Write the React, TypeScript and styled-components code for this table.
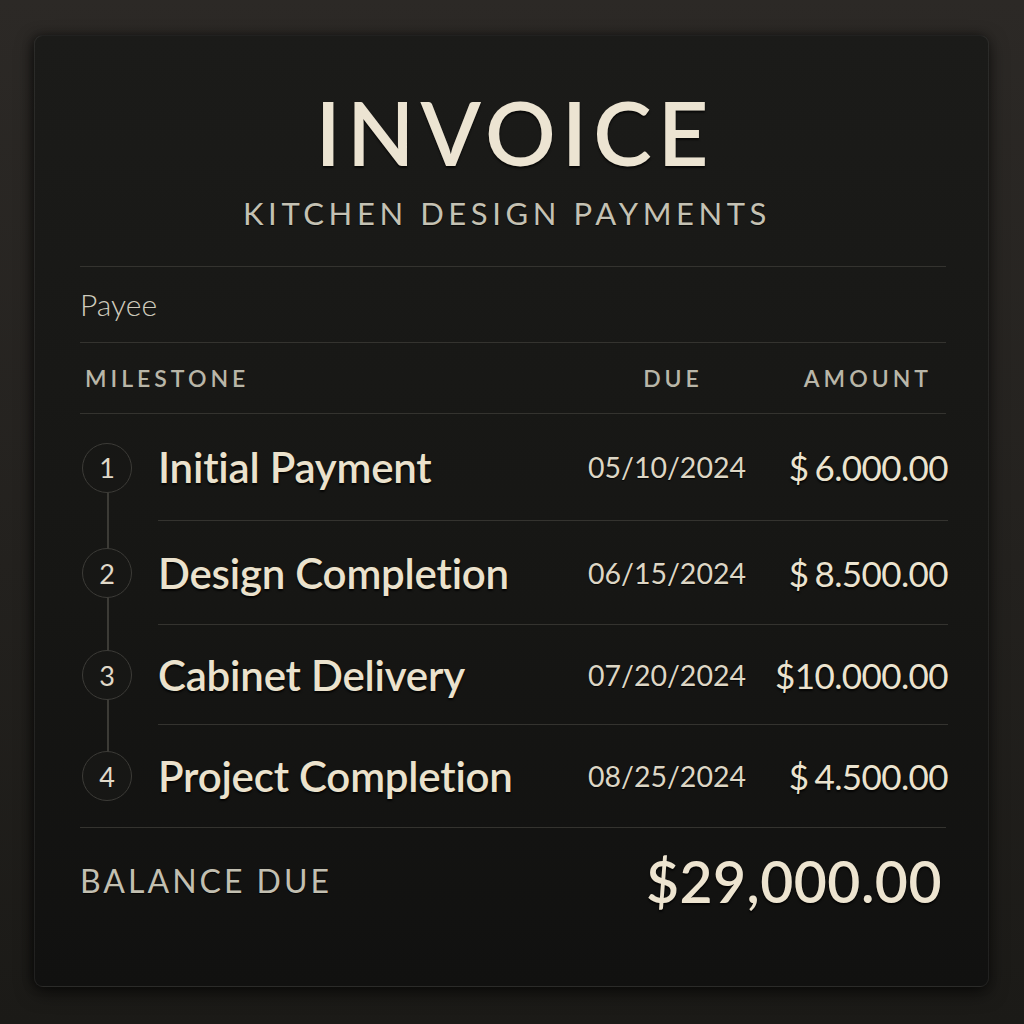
import React from "react";
import styled, { createGlobalStyle } from "styled-components";

const Global = createGlobalStyle`
  html, body { margin: 0; padding: 0; }
  body {
    background: linear-gradient(180deg, #2c2926 0%, #23211e 55%, #1b1a17 100%);
    font-family: Lato, "Noto Sans", sans-serif;
    min-height: 1024px;
  }
`;

const Page = styled.div`
  width: 1024px;
  height: 1024px;
  box-sizing: border-box;
  padding: 35px 35px 37px 34px;
  display: flex;
`;

const Card = styled.div`
  flex: 1;
  box-sizing: border-box;
  border-radius: 9px;
  background: linear-gradient(180deg, #1b1b19 0%, #161614 60%, #111110 100%);
  border: 1px solid rgba(255, 255, 255, 0.07);
  box-shadow: 0 6px 18px rgba(0, 0, 0, 0.55), -2px 0 10px rgba(0, 0, 0, 0.4);
  padding: 0 42px 0 45px;
  display: flex;
  flex-direction: column;
`;

const Header = styled.header`
  display: flex;
  flex-direction: column;
  align-items: center;
  padding-top: 44px;
  height: 231px;
  box-sizing: border-box;
  border-bottom: 1px solid #34332f;
`;

const Title = styled.h1`
  margin: 0;
  font-family: Lato, sans-serif;
  font-weight: 600;
  font-size: 88px;
  line-height: 104px;
  letter-spacing: 6px;
  color: #ece4d2;
  text-shadow: 0 2px 2px rgba(0, 0, 0, 0.7);
  padding-left: 4px;
`;

const Subtitle = styled.div`
  margin-top: 10px;
  font-size: 31px;
  letter-spacing: 4.6px;
  color: #c4c1b3;
  font-weight: 400;
  text-shadow: 0 1px 1px rgba(0, 0, 0, 0.7);
  padding-right: 12px;
`;

const PayeeRow = styled.div`
  height: 76px;
  display: flex;
  align-items: center;
  border-bottom: 1px solid #34332f;
  font-size: 30px;
  font-weight: 300;
  color: #cfcbbd;
  padding-bottom: 2px;
  box-sizing: border-box;
`;

const Grid = styled.div`
  display: grid;
  grid-template-columns: 1fr 190px 200px;
  align-items: center;
`;

const HeadRow = styled(Grid)`
  height: 71px;
  border-bottom: 1px solid #34332f;
  box-sizing: border-box;
`;

const HeadCell = styled.div<{ $align?: string; $pl?: number; $pr?: number }>`
  font-size: 23px;
  font-weight: 600;
  letter-spacing: 4px;
  color: #b9b6a8;
  text-align: ${(p) => p.$align || "left"};
  padding-right: ${(p) => p.$pr || 0}px;
  padding-left: ${(p) => p.$pl ?? 5}px;
`;

const Rows = styled.div`
  display: flex;
  flex-direction: column;
  border-bottom: 1px solid #34332f;
`;

const Row = styled.div<{ $h: number }>`
  display: grid;
  grid-template-columns: 78px 1fr;
  height: ${(p) => p.$h}px;
`;

const Marker = styled.div<{ $first?: boolean; $last?: boolean }>`
  position: relative;
  display: flex;
  align-items: center;
  &::before {
    content: "";
    position: absolute;
    left: 27px;
    width: 1.5px;
    background: #3c3b36;
    top: ${(p) => (p.$first ? "50%" : "0")};
    bottom: ${(p) => (p.$last ? "50%" : "0")};
  }
`;

const Circle = styled.div`
  position: relative;
  z-index: 1;
  width: 50px;
  height: 50px;
  margin-left: 2px;
  box-sizing: border-box;
  border-radius: 50%;
  border: 1.5px solid #3c3b37;
  background: #171715;
  display: flex;
  align-items: center;
  justify-content: center;
  font-size: 27px;
  color: #e0d9c9;
`;

const RowBody = styled(Grid)<{ $line?: boolean }>`
  border-bottom: ${(p) => (p.$line ? "1px solid #34332f" : "none")};
  margin-right: -2px;
`;

const Name = styled.div`
  font-size: 42px;
  font-weight: 600;
  color: #ebe2cd;
  text-shadow: 0 2px 2px rgba(0, 0, 0, 0.8);
  letter-spacing: -0.2px;
`;

const DateCell = styled.div`
  font-size: 28.5px;
  color: #ddd6c5;
  text-align: right;
  padding-right: 2px;
  text-shadow: 0 1px 1px rgba(0, 0, 0, 0.8);
`;

const Amount = styled.div`
  font-size: 35px;
  color: #ebe3cf;
  text-align: right;
  letter-spacing: -0.6px;
  text-shadow: 0 2px 2px rgba(0, 0, 0, 0.8);
`;

const Dollar = styled.span<{ $gap: number }>`
  margin-right: ${(p) => p.$gap}px;
`;

const Footer = styled.div`
  display: flex;
  justify-content: space-between;
  align-items: center;
  height: 105px;
  padding-right: 4px;
`;

const BalanceLabel = styled.div`
  font-size: 32px;
  letter-spacing: 3px;
  color: #c2bfb1;
  text-shadow: 0 1px 1px rgba(0, 0, 0, 0.8);
`;

const Total = styled.div`
  font-size: 57px;
  font-weight: 600;
  color: #ede4d0;
  text-shadow: 0 2px 2px rgba(0, 0, 0, 0.8);
  letter-spacing: 0.5px;
`;

const items = [
  { n: 1, name: "Initial Payment", due: "05/10/2024", amt: "6.000.00", gap: 6, h: 107 },
  { n: 2, name: "Design Completion", due: "06/15/2024", amt: "8.500.00", gap: 6, h: 104 },
  { n: 3, name: "Cabinet Delivery", due: "07/20/2024", amt: "10.000.00", gap: 0, h: 100 },
  { n: 4, name: "Project Completion", due: "08/25/2024", amt: "4.500.00", gap: 6, h: 102 },
];

export default function App() {
  return (
    <>
      <Global />
      <Page>
        <Card>
          <Header>
            <Title>INVOICE</Title>
            <Subtitle>KITCHEN DESIGN PAYMENTS</Subtitle>
          </Header>
          <PayeeRow>Payee</PayeeRow>
          <HeadRow>
            <HeadCell>MILESTONE</HeadCell>
            <HeadCell $align="center" $pl={44}>DUE</HeadCell>
            <HeadCell $align="right" $pr={14}>AMOUNT</HeadCell>
          </HeadRow>
          <Rows>
            {items.map((it, i) => (
              <Row key={it.n} $h={it.h}>
                <Marker $first={i === 0} $last={i === items.length - 1}>
                  <Circle>{it.n}</Circle>
                </Marker>
                <RowBody $line={i < items.length - 1}>
                  <Name>{it.name}</Name>
                  <DateCell>{it.due}</DateCell>
                  <Amount>
                    <Dollar $gap={it.gap}>$</Dollar>
                    {it.amt}
                  </Amount>
                </RowBody>
              </Row>
            ))}
          </Rows>
          <Footer>
            <BalanceLabel>BALANCE DUE</BalanceLabel>
            <Total>$29,000.00</Total>
          </Footer>
        </Card>
      </Page>
    </>
  );
}
